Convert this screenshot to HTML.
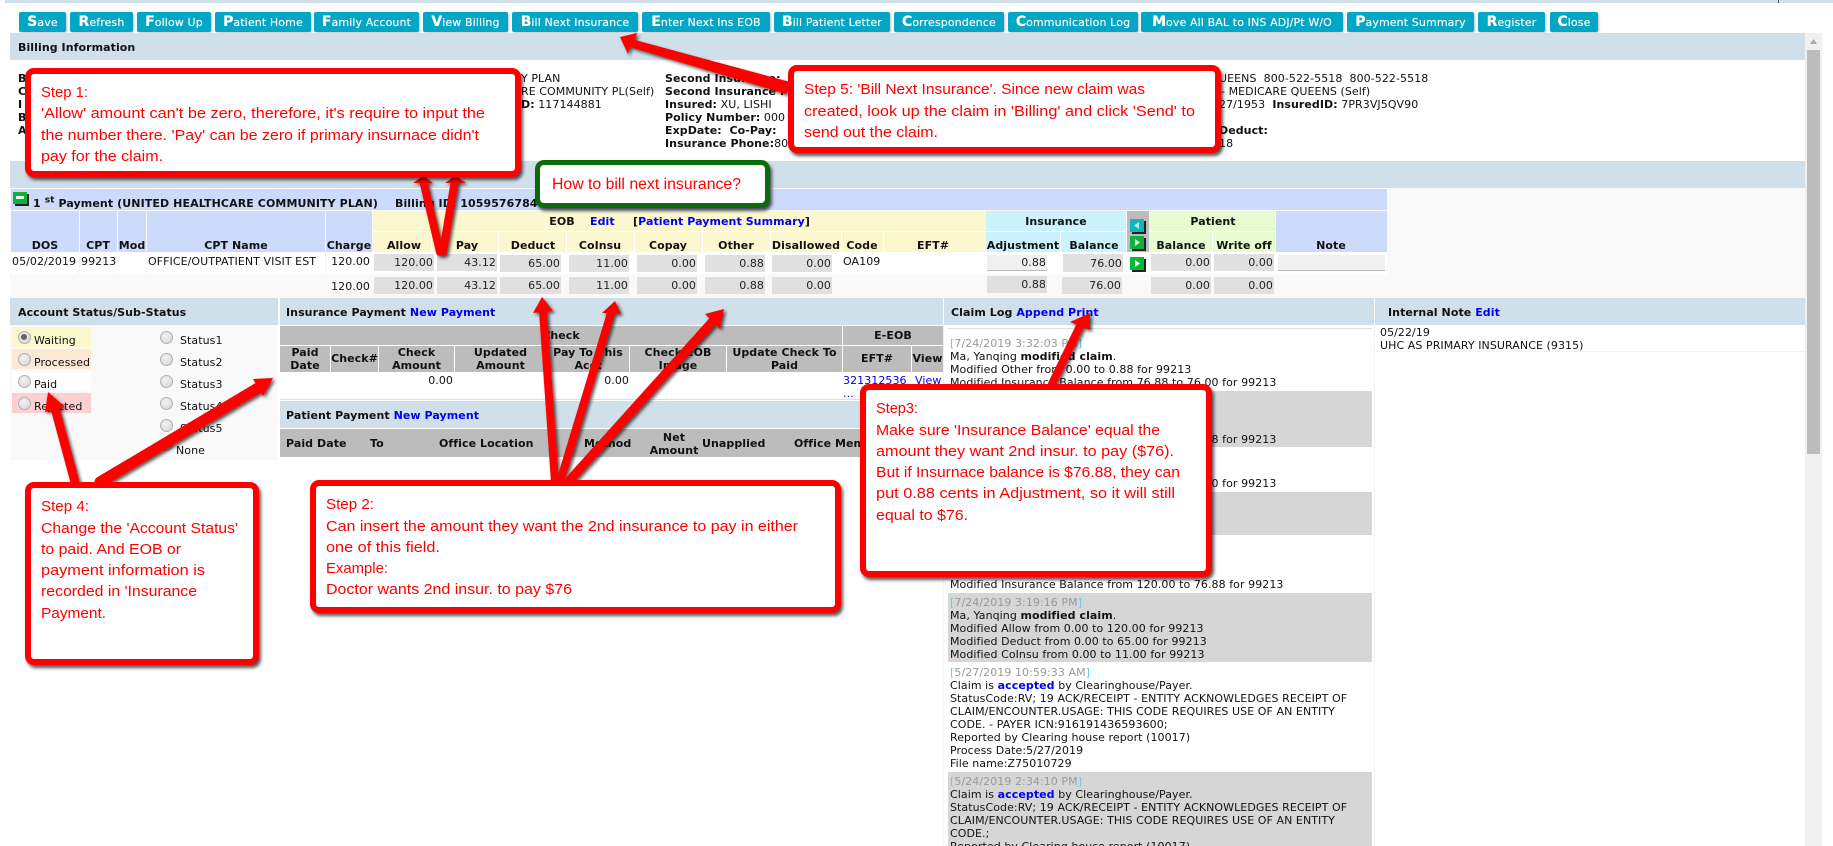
<!DOCTYPE html>
<html><head><meta charset="utf-8"><title>Billing</title>
<style>
html,body{margin:0;padding:0;background:#fff;width:1833px;height:846px;overflow:hidden}
#p{position:relative;width:1833px;height:846px;overflow:hidden;background:#fff}
.a{position:absolute}
.t{position:absolute;white-space:nowrap;font:11px/13px "DejaVu Sans",sans-serif;letter-spacing:.07px;color:#111}
.b{font-weight:bold}
.c{text-align:center}
.l{color:#00e}
.btn{position:absolute;top:12px;height:20px;background:#03a6c4;border-radius:2px;box-shadow:1px 1px 2px rgba(0,0,0,.25);color:#f4fbff;text-align:center;font:11px/21px "DejaVu Sans",sans-serif;letter-spacing:.12px;text-shadow:0 0 .5px #fff;white-space:nowrap}
.btn b{font-size:14px;color:#fff;font-family:"DejaVu Sans",sans-serif;letter-spacing:0}
.bar{position:absolute;background:#cfe0ea}
.v{position:absolute;background:#e0e0e0;text-align:right;font:11px/18px "DejaVu Sans",sans-serif;letter-spacing:.07px;color:#222;height:17px;padding-right:1px;box-sizing:border-box}
.r{position:absolute;width:11px;height:11px;border-radius:50%;border:1px solid #b0b0b0;background:radial-gradient(circle at 40% 35%,#f2f2f2,#d4d4d4);box-sizing:content-box}
.box{position:absolute;box-sizing:border-box;background:#fff;border:6px solid #f00;border-radius:9px;box-shadow:2px 3px 3px rgba(0,0,0,.65)}
.log{position:absolute;left:948px;width:424px;background:#d6d6d6}
.d{color:#999}.d i{color:#66ccee;font-style:normal}
</style></head><body><div id="p">

<!-- top strip -->
<div class="a" style="left:5px;top:0;width:1828px;height:3px;background:#cfe0ea"></div>
<div class="a" style="left:1778px;top:0;width:1px;height:3px;background:#555"></div>

<!-- buttons -->
<div class="btn" style="left:19px;width:47px"><b>S</b>ave</div>
<div class="btn" style="left:70px;width:63px"><b>R</b>efresh</div>
<div class="btn" style="left:137px;width:74px"><b>F</b>ollow Up</div>
<div class="btn" style="left:215px;width:96px"><b>P</b>atient Home</div>
<div class="btn" style="left:314px;width:105px"><b>F</b>amily Account</div>
<div class="btn" style="left:423px;width:85px"><b>V</b>iew Billing</div>
<div class="btn" style="left:512px;width:126px"><b>B</b>ill Next Insurance</div>
<div class="btn" style="left:642px;width:128px"><b>E</b>nter Next Ins EOB</div>
<div class="btn" style="left:774px;width:116px"><b>B</b>ill Patient Letter</div>
<div class="btn" style="left:894px;width:110px"><b>C</b>orrespondence</div>
<div class="btn" style="left:1008px;width:130px"><b>C</b>ommunication Log</div>
<div class="btn" style="left:1141px;width:202px"><b>M</b>ove All BAL to INS ADJ/Pt W/O</div>
<div class="btn" style="left:1347px;width:127px"><b>P</b>ayment Summary</div>
<div class="btn" style="left:1478px;width:67px"><b>R</b>egister</div>
<div class="btn" style="left:1550px;width:48px"><b>C</b>lose</div>

<!-- billing info -->
<div class="bar" style="left:10px;top:33px;width:1795px;height:27px"></div>
<div class="t b" style="left:18px;top:41px">Billing Information</div>
<div class="t b" style="left:18px;top:72px">B</div>
<div class="t b" style="left:18px;top:85px">C</div>
<div class="t b" style="left:18px;top:98px">I</div>
<div class="t b" style="left:18px;top:111px">B</div>
<div class="t b" style="left:18px;top:124px">A</div>
<div class="t" style="left:521px;top:72px">Y PLAN</div>
<div class="t" style="left:521px;top:85px">RE COMMUNITY PL(Self)</div>
<div class="t" style="left:521px;top:98px"><span class="b">D:</span> 117144881</div>
<div class="t" style="left:665px;top:72px"><span class="b">Second Insurance:</span></div>
<div class="t" style="left:665px;top:85px"><span class="b">Second Insurance P</span></div>
<div class="t" style="left:665px;top:98px"><span class="b">Insured:</span> XU, LISHI</div>
<div class="t" style="left:665px;top:111px"><span class="b">Policy Number:</span> 000</div>
<div class="t" style="left:665px;top:124px"><span class="b">ExpDate: &nbsp;Co-Pay:</span></div>
<div class="t" style="left:665px;top:137px"><span class="b">Insurance Phone:</span>80</div>
<div class="t" style="left:1219px;top:72px">UEENS &nbsp;800-522-5518 &nbsp;800-522-5518</div>
<div class="t" style="left:1221px;top:85px">- MEDICARE QUEENS (Self)</div>
<div class="t" style="left:1219px;top:98px">27/1953 &nbsp;<span class="b">InsuredID:</span> 7PR3VJ5QV90</div>
<div class="t b" style="left:1219px;top:124px">Deduct:</div>
<div class="t" style="left:1219px;top:137px">18</div>

<!-- second bar + payment table bg -->
<div class="bar" style="left:10px;top:161px;width:1795px;height:27px"></div>
<div class="a" style="left:10px;top:188px;width:1795px;height:110px;background:#f9f9f9"></div>
<div class="a" style="left:11px;top:189px;width:1376px;height:21px;background:#ccdafb"></div>
<svg class="a" style="left:13px;top:192px" width="17" height="15"><rect x="2" y="2" width="14" height="12" fill="#222"/><rect x="0" y="0" width="14" height="12" fill="#12b040"/><rect x="3" y="4" width="8" height="3" fill="#e8ffe8"/></svg>
<div class="t b" style="left:33px;top:197px;letter-spacing:.1px">1 <sup style="font-size:9px;line-height:0">st</sup> Payment (UNITED HEALTHCARE COMMUNITY PLAN)</div>
<div class="t b" style="left:395px;top:197px">Billing ID: 1059576784</div>

<!-- header cells -->
<div class="a" style="left:11px;top:211px;width:68px;height:41px;background:#ccdafb"></div>
<div class="a" style="left:80px;top:211px;width:37px;height:41px;background:#ccdafb"></div>
<div class="a" style="left:118px;top:211px;width:28px;height:41px;background:#ccdafb"></div>
<div class="a" style="left:147px;top:211px;width:178px;height:41px;background:#ccdafb"></div>
<div class="a" style="left:326px;top:211px;width:46px;height:41px;background:#ccdafb"></div>
<div class="a" style="left:373px;top:211px;width:613px;height:41px;background:#fbf8d0"></div>
<div class="a" style="left:373px;top:231px;width:613px;height:1px;background:#fff"></div>
<div class="a" style="left:431px;top:232px;width:1px;height:20px;background:#fff"></div>
<div class="a" style="left:498px;top:232px;width:1px;height:20px;background:#fff"></div>
<div class="a" style="left:566px;top:232px;width:1px;height:20px;background:#fff"></div>
<div class="a" style="left:634px;top:232px;width:1px;height:20px;background:#fff"></div>
<div class="a" style="left:702px;top:232px;width:1px;height:20px;background:#fff"></div>
<div class="a" style="left:770px;top:232px;width:1px;height:20px;background:#fff"></div>
<div class="a" style="left:841px;top:232px;width:1px;height:20px;background:#fff"></div>
<div class="a" style="left:883px;top:232px;width:1px;height:20px;background:#fff"></div>
<div class="a" style="left:986px;top:211px;width:140px;height:41px;background:#ccf2fd"></div>
<div class="a" style="left:986px;top:231px;width:140px;height:1px;background:#fff"></div>
<div class="a" style="left:1060px;top:232px;width:1px;height:20px;background:#fff"></div>
<div class="a" style="left:1127px;top:211px;width:22px;height:41px;background:#bcbcbc"></div>
<div class="a" style="left:1150px;top:211px;width:125px;height:41px;background:#e6fbd0"></div>
<div class="a" style="left:1150px;top:231px;width:125px;height:1px;background:#fff"></div>
<div class="a" style="left:1212px;top:232px;width:1px;height:20px;background:#fff"></div>
<div class="a" style="left:1276px;top:211px;width:111px;height:41px;background:#ccdafb"></div>

<div class="t b c" style="left:530px;width:64px;top:215px">EOB</div>
<div class="t b l" style="left:590px;top:215px">Edit</div>
<div class="t b" style="left:633px;top:215px">[<span class="l">Patient Payment Summary</span>]</div>
<div class="t b c" style="left:1016px;width:80px;top:215px">Insurance</div>
<div class="t b c" style="left:1173px;width:80px;top:215px">Patient</div>

<div class="t b c" style="left:5px;width:80px;top:239px">DOS</div>
<div class="t b c" style="left:58px;width:80px;top:239px">CPT</div>
<div class="t b c" style="left:92px;width:80px;top:239px">Mod</div>
<div class="t b c" style="left:186px;width:100px;top:239px">CPT Name</div>
<div class="t b c" style="left:309px;width:80px;top:239px">Charge</div>
<div class="t b c" style="left:364px;width:80px;top:239px">Allow</div>
<div class="t b c" style="left:427px;width:80px;top:239px">Pay</div>
<div class="t b c" style="left:493px;width:80px;top:239px">Deduct</div>
<div class="t b c" style="left:560px;width:80px;top:239px">CoInsu</div>
<div class="t b c" style="left:628px;width:80px;top:239px">Copay</div>
<div class="t b c" style="left:696px;width:80px;top:239px">Other</div>
<div class="t b c" style="left:766px;width:80px;top:239px">Disallowed</div>
<div class="t b c" style="left:822px;width:80px;top:239px">Code</div>
<div class="t b c" style="left:893px;width:80px;top:239px">EFT#</div>
<div class="t b c" style="left:983px;width:80px;top:239px">Adjustment</div>
<div class="t b c" style="left:1054px;width:80px;top:239px">Balance</div>
<div class="t b c" style="left:1141px;width:80px;top:239px">Balance</div>
<div class="t b c" style="left:1204px;width:80px;top:239px">Write off</div>
<div class="t b c" style="left:1291px;width:80px;top:239px">Note</div>

<svg class="a" style="left:1130px;top:219px" width="17" height="16"><rect x="2" y="2" width="14" height="13" fill="#222"/><rect width="14" height="13" fill="#12b8b8"/><path d="M9 3 L4 6.5 L9 10Z" fill="#b8e8e8"/></svg>
<svg class="a" style="left:1130px;top:236px" width="17" height="16"><rect x="2" y="2" width="14" height="13" fill="#222"/><rect width="14" height="13" fill="#12b040"/><path d="M5 3 L10 6.5 L5 10Z" fill="#c8f0c8"/></svg>

<!-- rows -->
<div class="a" style="left:11px;top:252px;width:1376px;height:22px;background:#fff"></div>
<div class="a" style="left:79px;top:252px;width:1px;height:22px;background:#f4f4f4"></div>
<div class="a" style="left:117px;top:252px;width:1px;height:22px;background:#f4f4f4"></div>
<div class="a" style="left:146px;top:252px;width:1px;height:22px;background:#f4f4f4"></div>
<div class="a" style="left:325px;top:252px;width:1px;height:22px;background:#f4f4f4"></div>
<div class="t" style="left:12px;top:255px">05/02/2019</div>
<div class="t" style="left:81px;top:255px">99213</div>
<div class="t" style="left:148px;top:255px">OFFICE/OUTPATIENT VISIT EST</div>
<div class="t" style="right:1463px;top:255px">120.00</div>
<div class="t" style="left:843px;top:255px">OA109</div>
<div class="t" style="right:1463px;top:280px">120.00</div>

<div class="v" style="left:374px;top:254px;width:60px">120.00</div>
<div class="v" style="left:437px;top:254px;width:60px">43.12</div>
<div class="v" style="left:500px;top:255px;width:61px">65.00</div>
<div class="v" style="left:569px;top:255px;width:60px">11.00</div>
<div class="v" style="left:637px;top:255px;width:60px">0.00</div>
<div class="v" style="left:705px;top:255px;width:60px">0.88</div>
<div class="v" style="left:772px;top:255px;width:60px">0.00</div>
<div class="v" style="left:987px;top:255px;width:60px;height:16px;background:#f0f0f0;border-bottom:1px solid #bbb;line-height:15px">0.88</div>
<div class="v" style="left:1063px;top:254px;width:60px;height:18px;line-height:20px">76.00</div>
<div class="v" style="left:1151px;top:254px;width:60px;line-height:17px">0.00</div>
<div class="v" style="left:1214px;top:254px;width:60px;line-height:17px">0.00</div>
<div class="v" style="left:1278px;top:255px;width:107px;height:16px;background:#f0f0f0;border-bottom:1px solid #bbb"></div>
<svg class="a" style="left:1130px;top:257px" width="17" height="16"><rect x="2" y="2" width="14" height="13" fill="#222"/><rect width="14" height="13" fill="#08b838"/><path d="M5 3 L10 6.5 L5 10Z" fill="#fff"/></svg>

<div class="v" style="left:374px;top:277px;width:60px">120.00</div>
<div class="v" style="left:437px;top:277px;width:60px">43.12</div>
<div class="v" style="left:500px;top:277px;width:61px">65.00</div>
<div class="v" style="left:569px;top:277px;width:60px">11.00</div>
<div class="v" style="left:637px;top:277px;width:60px">0.00</div>
<div class="v" style="left:705px;top:277px;width:60px">0.88</div>
<div class="v" style="left:772px;top:277px;width:60px">0.00</div>
<div class="v" style="left:987px;top:276px;width:60px">0.88</div>
<div class="v" style="left:1062px;top:277px;width:60px">76.00</div>
<div class="v" style="left:1151px;top:277px;width:60px">0.00</div>
<div class="v" style="left:1214px;top:277px;width:60px">0.00</div>

<!-- lower bars -->
<div class="bar" style="left:10px;top:298px;width:268px;height:27px"></div>
<div class="bar" style="left:280px;top:298px;width:663px;height:27px"></div>
<div class="bar" style="left:944px;top:298px;width:430px;height:27px"></div>
<div class="bar" style="left:1375px;top:298px;width:430px;height:27px"></div>
<div class="t b" style="left:18px;top:306px">Account Status/Sub-Status</div>
<div class="t b" style="left:286px;top:306px">Insurance Payment <span class="l">New Payment</span></div>
<div class="t b" style="left:951px;top:306px">Claim Log <span class="l">Append Print</span></div>
<div class="t b" style="left:1388px;top:306px">Internal Note <span class="l">Edit</span></div>

<!-- account status -->
<div class="a" style="left:10px;top:325px;width:268px;height:135px;background:#f9f9f9"></div>
<div class="a" style="left:12px;top:327px;width:79px;height:20px;background:#fbf8cc"></div>
<div class="a" style="left:12px;top:349px;width:79px;height:20px;background:#fde8d4"></div>
<div class="a" style="left:12px;top:371px;width:79px;height:20px;background:#fff"></div>
<div class="a" style="left:12px;top:393px;width:79px;height:20px;background:#fcd0d0"></div>
<div class="r" style="left:18px;top:331px"></div>
<div class="a" style="left:21px;top:334px;width:6px;height:6px;border-radius:50%;background:#666"></div>
<div class="r" style="left:18px;top:353px"></div>
<div class="r" style="left:18px;top:375px"></div>
<div class="r" style="left:18px;top:397px"></div>
<div class="t" style="left:34px;top:334px">Waiting</div>
<div class="t" style="left:34px;top:356px">Processed</div>
<div class="t" style="left:34px;top:378px">Paid</div>
<div class="t" style="left:34px;top:400px">Rejected</div>
<div class="r" style="left:160px;top:331px"></div>
<div class="r" style="left:160px;top:353px"></div>
<div class="r" style="left:160px;top:375px"></div>
<div class="r" style="left:160px;top:397px"></div>
<div class="r" style="left:160px;top:419px"></div>
<div class="r" style="left:160px;top:438px"></div>
<div class="t" style="left:180px;top:334px">Status1</div>
<div class="t" style="left:180px;top:356px">Status2</div>
<div class="t" style="left:180px;top:378px">Status3</div>
<div class="t" style="left:180px;top:400px">Status4</div>
<div class="t" style="left:180px;top:422px">Status5</div>
<div class="t" style="left:176px;top:444px">None</div>

<!-- insurance payment table -->
<div class="a" style="left:280px;top:326px;width:562px;height:19px;background:#bcbcbc"></div>
<div class="a" style="left:843px;top:326px;width:100px;height:19px;background:#bcbcbc"></div>
<div class="a" style="left:280px;top:346px;width:50px;height:26px;background:#bcbcbc"></div>
<div class="a" style="left:331px;top:346px;width:47px;height:26px;background:#bcbcbc"></div>
<div class="a" style="left:379px;top:346px;width:75px;height:26px;background:#bcbcbc"></div>
<div class="a" style="left:455px;top:346px;width:91px;height:26px;background:#bcbcbc"></div>
<div class="a" style="left:547px;top:346px;width:82px;height:26px;background:#bcbcbc"></div>
<div class="a" style="left:630px;top:346px;width:96px;height:26px;background:#bcbcbc"></div>
<div class="a" style="left:727px;top:346px;width:115px;height:26px;background:#bcbcbc"></div>
<div class="a" style="left:843px;top:346px;width:68px;height:26px;background:#bcbcbc"></div>
<div class="a" style="left:912px;top:346px;width:31px;height:26px;background:#bcbcbc"></div>
<div class="t b c" style="left:280px;width:562px;top:329px">Check</div>
<div class="t b c" style="left:843px;width:100px;top:329px">E-EOB</div>
<div class="t b c" style="left:280px;width:50px;top:346px">Paid<br>Date</div>
<div class="t b c" style="left:331px;width:47px;top:352px">Check#</div>
<div class="t b c" style="left:379px;width:75px;top:346px">Check<br>Amount</div>
<div class="t b c" style="left:455px;width:91px;top:346px">Updated<br>Amount</div>
<div class="t b c" style="left:547px;width:82px;top:346px">Pay To This<br>Acct</div>
<div class="t b c" style="left:630px;width:96px;top:346px">Check EOB<br>Image</div>
<div class="t b c" style="left:727px;width:115px;top:346px">Update Check To<br>Paid</div>
<div class="t b c" style="left:843px;width:68px;top:352px">EFT#</div>
<div class="t b c" style="left:912px;width:31px;top:352px">View</div>
<div class="t" style="right:1380px;top:374px">0.00</div>
<div class="t" style="right:1204px;top:374px">0.00</div>
<div class="t l" style="left:843px;top:374px">321312536</div>
<div class="t l" style="left:915px;top:374px">View</div>
<div class="t l" style="left:843px;top:387px">...</div>
<div class="a" style="left:280px;top:399px;width:663px;height:1px;background:#ddd"></div>

<div class="bar" style="left:280px;top:401px;width:663px;height:27px"></div>
<div class="t b" style="left:286px;top:409px">Patient Payment <span class="l">New Payment</span></div>
<div class="a" style="left:280px;top:429px;width:663px;height:28px;background:#bcbcbc"></div>
<div class="t b" style="left:286px;top:437px">Paid Date</div>
<div class="t b" style="left:370px;top:437px">To</div>
<div class="t b" style="left:439px;top:437px">Office Location</div>
<div class="t b" style="left:584px;top:437px">Method</div>
<div class="t b c" style="left:644px;width:60px;top:431px">Net<br>Amount</div>
<div class="t b" style="left:702px;top:437px">Unapplied</div>
<div class="t b" style="left:794px;top:437px">Office Memo</div>

<!-- claim log -->
<div class="a" style="left:943px;top:325px;width:1px;height:521px;background:#f2f2f2"></div>
<div class="a" style="left:1374px;top:325px;width:1px;height:521px;background:#f2f2f2"></div>
<div class="a" style="left:948px;top:328px;width:424px;height:1px;background:#ddd"></div>
<div class="log" style="top:391px;height:56px"></div>
<div class="log" style="top:492px;height:43px"></div>
<div class="log" style="top:593px;height:69px"></div>
<div class="log" style="top:772px;height:74px"></div>
<div class="t" style="left:950px;top:337px"><span class="d"><i>[</i>7/24/2019 3:32:03 PM<i>]</i></span></div>
<div class="t" style="left:950px;top:350px">Ma, Yanqing <b>modified claim</b>.</div>
<div class="t" style="left:950px;top:363px">Modified Other from 0.00 to 0.88 for 99213</div>
<div class="t" style="left:950px;top:376px">Modified Insurance Balance from 76.88 to 76.00 for 99213</div>
<div class="t" style="left:950px;top:433px">Modified Insurance Balance from 76.00 to 76.88 for 99213</div>
<div class="t" style="left:950px;top:477px">Modified Insurance Balance from 76.88 to 76.00 for 99213</div>
<div class="t" style="left:950px;top:578px">Modified Insurance Balance from 120.00 to 76.88 for 99213</div>
<div class="t" style="left:950px;top:596px"><span class="d"><i>[</i>7/24/2019 3:19:16 PM<i>]</i></span></div>
<div class="t" style="left:950px;top:609px">Ma, Yanqing <b>modified claim</b>.</div>
<div class="t" style="left:950px;top:622px">Modified Allow from 0.00 to 120.00 for 99213</div>
<div class="t" style="left:950px;top:635px">Modified Deduct from 0.00 to 65.00 for 99213</div>
<div class="t" style="left:950px;top:648px">Modified CoInsu from 0.00 to 11.00 for 99213</div>
<div class="t" style="left:950px;top:666px"><span class="d"><i>[</i>5/27/2019 10:59:33 AM<i>]</i></span></div>
<div class="t" style="left:950px;top:679px">Claim is <b class="l">accepted</b> by Clearinghouse/Payer.</div>
<div class="t" style="left:950px;top:692px">StatusCode:RV; 19 ACK/RECEIPT - ENTITY ACKNOWLEDGES RECEIPT OF</div>
<div class="t" style="left:950px;top:705px">CLAIM/ENCOUNTER.USAGE: THIS CODE REQUIRES USE OF AN ENTITY</div>
<div class="t" style="left:950px;top:718px">CODE. - PAYER ICN:916191436593600;</div>
<div class="t" style="left:950px;top:731px">Reported by Clearing house report (10017)</div>
<div class="t" style="left:950px;top:744px">Process Date:5/27/2019</div>
<div class="t" style="left:950px;top:757px">File name:Z75010729</div>
<div class="t" style="left:950px;top:775px"><span class="d"><i>[</i>5/24/2019 2:34:10 PM<i>]</i></span></div>
<div class="t" style="left:950px;top:788px">Claim is <b class="l">accepted</b> by Clearinghouse/Payer.</div>
<div class="t" style="left:950px;top:801px">StatusCode:RV; 19 ACK/RECEIPT - ENTITY ACKNOWLEDGES RECEIPT OF</div>
<div class="t" style="left:950px;top:814px">CLAIM/ENCOUNTER.USAGE: THIS CODE REQUIRES USE OF AN ENTITY</div>
<div class="t" style="left:950px;top:827px">CODE.;</div>
<div class="t" style="left:950px;top:840px">Reported by Clearing house report (10017)</div>

<!-- internal note -->
<div class="t" style="left:1380px;top:326px">05/22/19</div>
<div class="t" style="left:1380px;top:339px">UHC AS PRIMARY INSURANCE (9315)</div>
<div class="a" style="left:1375px;top:351px;width:430px;height:1px;background:#f2f2f2"></div>

<!-- scrollbar -->
<div class="a" style="left:1805px;top:33px;width:17px;height:813px;background:#f0f0f0"></div>
<div class="a" style="left:1807px;top:50px;width:13px;height:404px;background:#bcbcbc"></div>
<svg class="a" style="left:1809px;top:38px" width="9" height="8"><path d="M4.5 1 L8 6 L1 6Z" fill="#a8a8a8"/></svg>

<!-- arrows -->
<svg class="a" style="left:0;top:0" width="1833" height="846">
<defs><filter id="s" x="-20%" y="-20%" width="140%" height="140%"><feDropShadow dx="2" dy="2" stdDeviation="1.5" flood-color="#000" flood-opacity=".65"/></filter></defs>
<g fill="#f00" stroke="#f00" stroke-linecap="round" filter="url(#s)">
<line x1="423" y1="180" x2="440" y2="252" stroke-width="8"/>
<line x1="455" y1="180" x2="443" y2="252" stroke-width="8"/>
<polygon points="423,176 413,183 433,183" stroke="none"/>
<polygon points="455,176 445,183 466,183" stroke="none"/>
<polygon points="620,37 637,33 635,40 790,82 786,94 630,47 628,54" stroke="none"/>
<line x1="55" y1="408" x2="75" y2="482" stroke-width="9"/>
<polygon points="48,392 45,412 65,407" stroke="none"/>
<line x1="258" y1="388" x2="100" y2="482" stroke-width="11"/>
<polygon points="273,378 253,379 263,396" stroke="none"/>
<line x1="543" y1="311" x2="555" y2="482" stroke-width="8"/>
<polygon points="542,297 533,313 553,311" stroke="none"/>
<line x1="611" y1="313" x2="560" y2="482" stroke-width="8"/>
<polygon points="615,301 602,313 621,314" stroke="none"/>
<line x1="713" y1="321" x2="568" y2="482" stroke-width="9"/>
<polygon points="724,309 705,314 720,329" stroke="none"/>
<line x1="1080" y1="326" x2="1052" y2="384" stroke-width="8"/>
<polygon points="1090,313 1070,322 1090,330" stroke="none"/>
</g>
</svg>

<!-- callouts -->
<div class="box" style="left:25px;top:68px;width:496px;height:109px"></div>
<div class="box" style="left:788px;top:65px;width:433px;height:88px"></div>
<div class="box" style="left:535px;top:160px;width:235px;height:48px;border:5px solid #0b6b0b"></div>
<div class="box" style="left:25px;top:482px;width:234px;height:183px"></div>
<div class="box" style="left:310px;top:480px;width:531px;height:133px"></div>
<div class="box" style="left:860px;top:384px;width:352px;height:193px"></div>

<svg class="a" style="left:0;top:0" width="1833" height="846" font-family="'Liberation Sans',sans-serif" font-size="15" fill="#f00">
<text x="41" y="97" textLength="47" lengthAdjust="spacingAndGlyphs">Step 1:</text>
<text x="41" y="118" textLength="444" lengthAdjust="spacingAndGlyphs">'Allow' amount can't be zero, therefore, it's require to input the</text>
<text x="41" y="140" textLength="438" lengthAdjust="spacingAndGlyphs">the number there. 'Pay' can be zero if primary insurnace didn't</text>
<text x="41" y="161" textLength="122" lengthAdjust="spacingAndGlyphs">pay for the claim.</text>

<text x="804" y="94" textLength="341" lengthAdjust="spacingAndGlyphs">Step 5: 'Bill Next Insurance'. Since new claim was</text>
<text x="804" y="116" textLength="391" lengthAdjust="spacingAndGlyphs">created,  look up the claim in 'Billing' and click 'Send' to</text>
<text x="804" y="137" textLength="134" lengthAdjust="spacingAndGlyphs">send out the claim.</text>

<text x="552" y="189" textLength="189" lengthAdjust="spacingAndGlyphs" font-size="16">How to bill next insurance?</text>

<text x="41" y="511" textLength="48" lengthAdjust="spacingAndGlyphs">Step 4:</text>
<text x="41" y="533" textLength="197" lengthAdjust="spacingAndGlyphs">Change the 'Account Status'</text>
<text x="41" y="554" textLength="140" lengthAdjust="spacingAndGlyphs">to paid. And EOB or</text>
<text x="41" y="575" textLength="164" lengthAdjust="spacingAndGlyphs">payment information is</text>
<text x="41" y="596" textLength="156" lengthAdjust="spacingAndGlyphs">recorded in 'Insurance</text>
<text x="41" y="618" textLength="65" lengthAdjust="spacingAndGlyphs">Payment.</text>

<text x="326" y="509" textLength="48" lengthAdjust="spacingAndGlyphs">Step 2:</text>
<text x="326" y="531" textLength="472" lengthAdjust="spacingAndGlyphs">Can insert the amount they want the 2nd insurance to pay in either</text>
<text x="326" y="552" textLength="114" lengthAdjust="spacingAndGlyphs">one of this field.</text>
<text x="326" y="573" textLength="62" lengthAdjust="spacingAndGlyphs">Example:</text>
<text x="326" y="594" textLength="246" lengthAdjust="spacingAndGlyphs">Doctor wants 2nd insur. to pay $76</text>

<text x="876" y="413" textLength="42" lengthAdjust="spacingAndGlyphs">Step3:</text>
<text x="876" y="435" textLength="284" lengthAdjust="spacingAndGlyphs">Make sure 'Insurance Balance' equal the</text>
<text x="876" y="456" textLength="298" lengthAdjust="spacingAndGlyphs">amount they want 2nd insur. to pay ($76).</text>
<text x="876" y="477" textLength="304" lengthAdjust="spacingAndGlyphs">But if Insurnace balance is $76.88, they can</text>
<text x="876" y="498" textLength="299" lengthAdjust="spacingAndGlyphs">put 0.88 cents in Adjustment, so it will still</text>
<text x="876" y="520" textLength="92" lengthAdjust="spacingAndGlyphs">equal to $76.</text>
</svg>

</div></body></html>
